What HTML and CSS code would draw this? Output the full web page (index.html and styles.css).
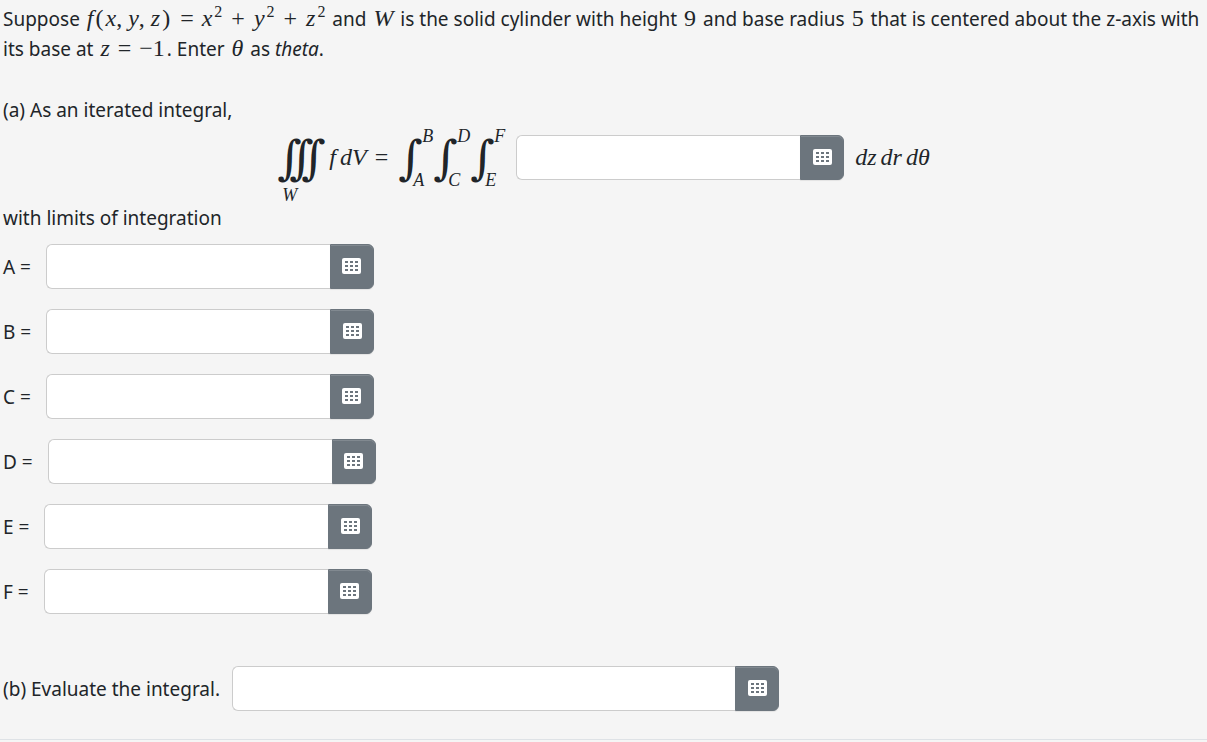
FILE: index.html
```html
<!DOCTYPE html>
<html lang="en">
<head>
    <meta charset="UTF-8">
    <title>Triple Integral over a Cylinder</title>
    <link rel="stylesheet" href="styles.css">
</head>
<body>

    <!-- Keypad icon shared by all answer buttons -->
    <svg class="icon-defs" aria-hidden="true">
        <symbol id="keypad" viewBox="0 0 19 16">
            <rect width="19" height="16" rx="2" fill="#fff"/>
            <path d="M3 4h3M8 4h3M13 4h3M3 8h3M8 8h3M13 8h3M3 12h3M8 12h3M13 12h3" stroke="#6c757d" stroke-width="2"/>
        </symbol>
    </svg>

    <form class="problem" action="submit" method="post">
        <p class="statement">
            Suppose <span class="math"><i>f</i><span class="paren">(</span><i>x</i>,<i class="arg">y</i>,<i class="arg">z</i><span class="paren">)</span><span class="rel">=</span><i>x</i><sup>2</sup><span class="op">+</span><i>y</i><sup>2</sup><span class="op">+</span><i>z</i><sup>2</sup></span>
            and <span class="math"><i>W</i></span> is the solid cylinder with height <span class="math">9</span> and base radius <span class="math">5</span> that is centered about the z-axis with its base at
            <span class="math"><i>z</i><span class="rel">=</span>−1</span>. Enter <span class="math"><i>θ</i></span> as <em>theta</em>.
        </p>

        <p class="part">(a) As an iterated integral,</p>

        <div class="equation">
            <div class="math region">
                <i class="int">∫</i><i class="int">∫</i><i class="int">∫</i>
                <i class="under">W</i>
            </div>
            <div class="math term"><i>f</i> <i>dV</i> <span class="equals">=</span></div>
            <div class="math integral">
                <i class="int">∫</i>
                <span class="limits"><i class="upper">B</i><i>A</i></span>
            </div>
            <div class="math integral">
                <i class="int">∫</i>
                <span class="limits"><i class="upper">D</i><i>C</i></span>
            </div>
            <div class="math integral">
                <i class="int">∫</i>
                <span class="limits"><i class="upper">F</i><i>E</i></span>
            </div>
            <div class="answer">
                <input type="text" name="integrand" aria-label="Integrand">
                <button type="button" aria-label="Open keypad"><svg class="icon"><use href="#keypad"/></svg></button>
            </div>
            <div class="math term"><i>dz</i> <i>dr</i> <i>dθ</i></div>
        </div>

        <p class="part">with limits of integration</p>

        <div class="limit-list">
            <div class="row">
                <label for="limA">A =</label>
                <div class="answer">
                    <input type="text" id="limA">
                    <button type="button" aria-label="Open keypad"><svg class="icon"><use href="#keypad"/></svg></button>
                </div>
            </div>
            <div class="row">
                <label for="limB">B =</label>
                <div class="answer">
                    <input type="text" id="limB">
                    <button type="button" aria-label="Open keypad"><svg class="icon"><use href="#keypad"/></svg></button>
                </div>
            </div>
            <div class="row">
                <label for="limC">C =</label>
                <div class="answer">
                    <input type="text" id="limC">
                    <button type="button" aria-label="Open keypad"><svg class="icon"><use href="#keypad"/></svg></button>
                </div>
            </div>
            <div class="row">
                <label for="limD">D =</label>
                <div class="answer">
                    <input type="text" id="limD">
                    <button type="button" aria-label="Open keypad"><svg class="icon"><use href="#keypad"/></svg></button>
                </div>
            </div>
            <div class="row">
                <label for="limE">E =</label>
                <div class="answer">
                    <input type="text" id="limE">
                    <button type="button" aria-label="Open keypad"><svg class="icon"><use href="#keypad"/></svg></button>
                </div>
            </div>
            <div class="row">
                <label for="limF">F =</label>
                <div class="answer">
                    <input type="text" id="limF">
                    <button type="button" aria-label="Open keypad"><svg class="icon"><use href="#keypad"/></svg></button>
                </div>
            </div>
        </div>

        <div class="row">
            <label for="result">(b) Evaluate the integral.</label>
            <div class="answer wide">
                <input type="text" id="result">
                <button type="button" aria-label="Open keypad"><svg class="icon"><use href="#keypad"/></svg></button>
            </div>
        </div>
    </form>

</body>
</html>
```
FILE: styles.css
```css
* {
    box-sizing: border-box;
}

body {
    margin: 0;
    background-color: #f5f5f5;
    color: #212529;
    font-family: 'Segoe UI', 'Noto Sans', sans-serif;
    font-size: 19px;
    line-height: 30px;
}

.icon-defs {
    display: none;
}

.problem {
    padding: 4px 3px 28px;
    border-bottom: 1px solid #dee2e6;
}

.statement {
    margin: 0 0 31px;
}

.part {
    margin: 0;
}

/* Math notation */
.math {
    font-family: 'Liberation Serif', serif;
    font-size: 24px;
    line-height: 24px;
    white-space: nowrap;
}

.statement .math {
    margin: 0 2px;
}

.math sup {
    margin-left: 2px;
    font-size: 16px;
    line-height: 0;
}

.math .paren {
    margin: 0 2px;
}

.math .arg {
    margin-left: 6px;
}

.math .rel {
    margin: 0 8px;
}

.math .op {
    margin: 0 9px;
}

/* Displayed equation, centered on the page */
.equation {
    display: flex;
    justify-content: center;
    align-items: flex-start;
    margin-top: 3px;
    height: 75px;
}

.equation .term {
    display: flex;
    gap: 4px;
    line-height: 58px;
}

.equation .equals {
    margin: 0 10px 0 4px;
}

.equation .answer {
    margin: 7px 11px 0;
}

.int {
    font-family: 'DejaVu Serif', serif;
    font-size: 47px;
    line-height: 60px;
}

.region {
    display: grid;
    grid-template-columns: repeat(3, 12px);
    padding-right: 16px;
}

.under {
    grid-column: 1 / 4;
    font-size: 18px;
    line-height: 14px;
    padding-left: 5px;
}

.integral {
    display: flex;
    height: 60px;
}

.integral .int {
    width: 15px;
}

.limits {
    display: flex;
    flex-direction: column;
    justify-content: space-between;
    font-size: 18px;
    line-height: 16px;
}

.limits .upper {
    padding-left: 9px;
}

/* Answer box with keypad button */
.answer {
    display: flex;
    width: 328px;
    height: 45px;
}

.answer.wide {
    width: 547px;
}

.answer input {
    flex: 1;
    min-width: 0;
    padding: 6px 12px;
    border: 1px solid #ccc;
    border-right: none;
    border-radius: 6px 0 0 6px;
    background-color: #fff;
    font: inherit;
}

.answer button {
    display: flex;
    align-items: center;
    justify-content: center;
    width: 44px;
    padding: 0 0 1px;
    border: 1px solid #6c757d;
    border-radius: 0 6px 6px 0;
    background-color: #6c757d;
    box-shadow: inset 0 1px 0 rgba(255, 255, 255, 0.15), 0 1px 1px rgba(0, 0, 0, 0.075);
    cursor: pointer;
}

.icon {
    width: 19px;
    height: 16px;
}

.row {
    display: flex;
    align-items: center;
    gap: 12px;
}

.limit-list {
    display: flex;
    flex-direction: column;
    gap: 20px;
    margin: 11px 0 52px;
}

.limit-list .row {
    gap: 15px;
}
```
